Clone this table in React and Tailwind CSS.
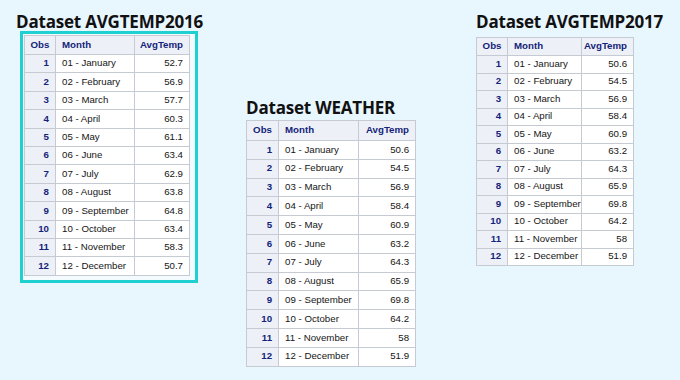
import React from 'react';

const MONTHS = [
  '01 - January', '02 - February', '03 - March', '04 - April', '05 - May', '06 - June',
  '07 - July', '08 - August', '09 - September', '10 - October', '11 - November', '12 - December',
];

const T2016 = ['52.7', '56.9', '57.7', '60.3', '61.1', '63.4', '62.9', '63.8', '64.8', '63.4', '58.3', '50.7'];
const T2017 = ['50.6', '54.5', '56.9', '58.4', '60.9', '63.2', '64.3', '65.9', '69.8', '64.2', '58', '51.9'];

function DataTable({ temps, cols, headH, rowH }) {
  const cell = 'border border-[#c6cad2]';
  return (
    <table
      className="table-fixed border-collapse bg-white text-[9.7px] text-[#151515] font-['Liberation_Sans',Arial,sans-serif]"
      style={{ width: cols[0] + cols[1] + cols[2] }}
    >
      <colgroup>
        <col style={{ width: cols[0] }} />
        <col style={{ width: cols[1] }} />
        <col style={{ width: cols[2] }} />
      </colgroup>
      <thead>
        <tr className="bg-[#edf1f7] font-bold text-[#14237a]" style={{ height: headH }}>
          <th className={`${cell} text-center`}>Obs</th>
          <th className={`${cell} text-left pl-[6px]`}>Month</th>
          <th className={`${cell} text-right pr-[6px]`}>AvgTemp</th>
        </tr>
      </thead>
      <tbody>
        {MONTHS.map((m, i) => (
          <tr key={m} style={{ height: rowH }}>
            <td className={`${cell} bg-[#edf1f7] text-right pr-[6px] font-bold text-[#14237a]`}>{i + 1}</td>
            <td className={`${cell} pl-[6px]`}>{m}</td>
            <td className={`${cell} text-right pr-[6px]`}>{temps[i]}</td>
          </tr>
        ))}
      </tbody>
    </table>
  );
}

function Title({ children }) {
  return (
    <h2 className="text-[17px] leading-[20px] font-bold text-[#111] font-['Open_Sans',sans-serif] tracking-[-0.2px]">
      {children}
    </h2>
  );
}

export default function App() {
  return (
    <div className="w-[680px] h-[380px] overflow-hidden bg-[#e8f6fe] flex items-start">
      <div className="ml-[16px] mt-[12px] flex flex-col items-start">
        <Title>Dataset AVGTEMP2016</Title>
        <div className="ml-[4px] mt-[-1px] border-[3px] border-[#1fd0d0] bg-[#f4fbff] pt-[1px] pl-[1px] pr-[5px] pb-[4px]">
          <DataTable temps={T2016} cols={[31, 79, 55]} headH={19} rowH={18.4} />
        </div>
      </div>

      <div className="ml-[43px] mt-[98px] flex flex-col items-start">
        <Title>Dataset WEATHER</Title>
        <div className="mt-[2px]">
          <DataTable temps={T2017} cols={[32, 80, 57]} headH={20} rowH={18.8} />
        </div>
      </div>

      <div className="ml-[60px] mt-[12px] flex flex-col items-start">
        <Title>Dataset AVGTEMP2017</Title>
        <div className="mt-[5px]">
          <DataTable temps={T2017} cols={[31, 74, 52]} headH={18} rowH={17.5} />
        </div>
      </div>
    </div>
  );
}
